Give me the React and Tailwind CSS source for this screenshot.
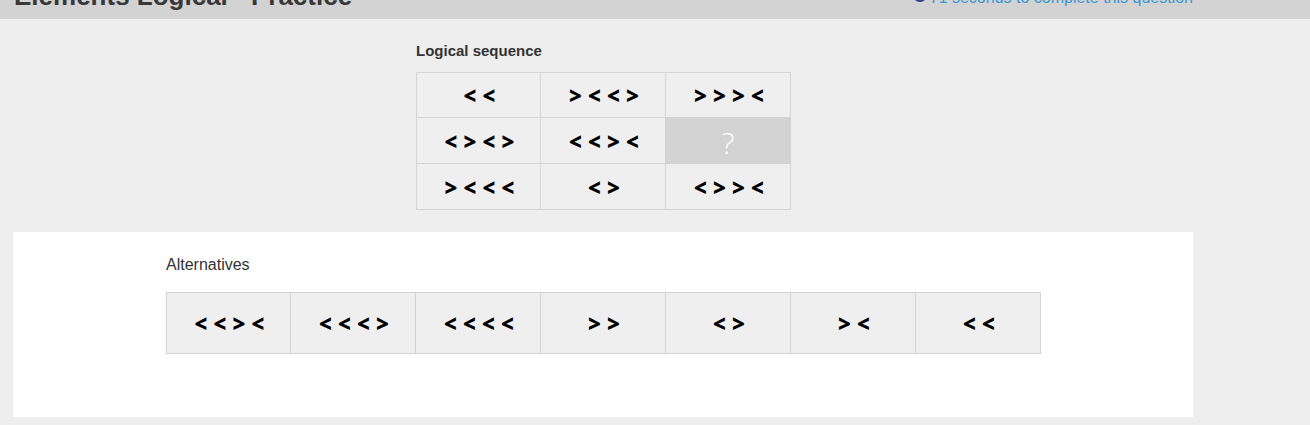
import React from "react";

const seq = [
  ["<<", "><<>", ">>><"],
  ["<><>", "<<><", null],
  ["><<<", "<>", "<>><"],
];
const alts = ["<<><", "<<<>", "<<<<", ">>", "<>", "><", "<<"];

function Glyphs({ s }) {
  return (
    <div className="flex gap-[8px] items-center">
      {s.split("").map((c, i) => (
        <span
          key={i}
          className="inline-block w-[11px] text-center text-[22px] leading-none font-extrabold text-black"
          style={{ fontFamily: '"Open Sans", sans-serif' }}
        >
          {c}
        </span>
      ))}
    </div>
  );
}

export default function App() {
  return (
    <div
      className="w-[1310px] h-[425px] bg-[#eeeeee] overflow-hidden"
      style={{ fontFamily: '"Liberation Sans", Arial, sans-serif' }}
    >
      <div className="h-[19px] bg-[#d3d3d3] overflow-hidden">
        <div className="ml-[13px] w-[1180px] flex justify-between items-start">
          <div className="ml-[1px] mt-[-17px] text-[26px] leading-[26px] font-bold text-[#383838]">
            Elements Logical - Practice
          </div>
          <div className="mt-[-10px] flex items-start text-[16px] leading-[16px] text-[#3a97d4]">
            <span className="mt-[-2px] mr-[3px] inline-block w-[14px] h-[14px] rounded-full border-[3px] border-[#2c3e8c]"></span>
            <span>71 seconds to complete this question</span>
          </div>
        </div>
      </div>

      <div className="pt-[22px] pl-[416px]">
        <div className="text-[15px] leading-[20px] font-bold text-[#333333]">
          Logical sequence
        </div>
        <div className="mt-[11px] grid grid-cols-[124px_125px_125px] grid-rows-[45px_46px_46px] w-[375px] border-l border-t border-[#d5d5d5]">
          {seq.flat().map((s, i) =>
            s === null ? (
              <div
                key={i}
                className="bg-[#d3d3d3] border-r border-b border-[#d3d3d3] flex items-center justify-center"
              >
                <span
                  className="text-white text-[30px] leading-none font-light mt-[4px]"
                  style={{ fontFamily: '"Open Sans", sans-serif' }}
                >
                  ?
                </span>
              </div>
            ) : (
              <div
                key={i}
                className="bg-[#efefef] border-r border-b border-[#d5d5d5] flex items-center justify-center"
              >
                <Glyphs s={s} />
              </div>
            )
          )}
        </div>
      </div>

      <div className="mt-[22px] ml-[13px] w-[1180px] h-[185px] bg-white pt-[21px] pl-[153px]">
        <div className="text-[16px] leading-[24px] text-[#333333]">Alternatives</div>
        <div className="mt-[15px] flex w-fit border-l border-t border-[#d3d3d3]">
          {alts.map((s, i) => (
            <div
              key={i}
              className={`${i === 0 ? "w-[124px]" : "w-[125px]"} h-[61px] bg-[#efefef] border-r border-b border-[#d3d3d3] flex items-center justify-center`}
            >
              <Glyphs s={s} />
            </div>
          ))}
        </div>
      </div>
    </div>
  );
}
